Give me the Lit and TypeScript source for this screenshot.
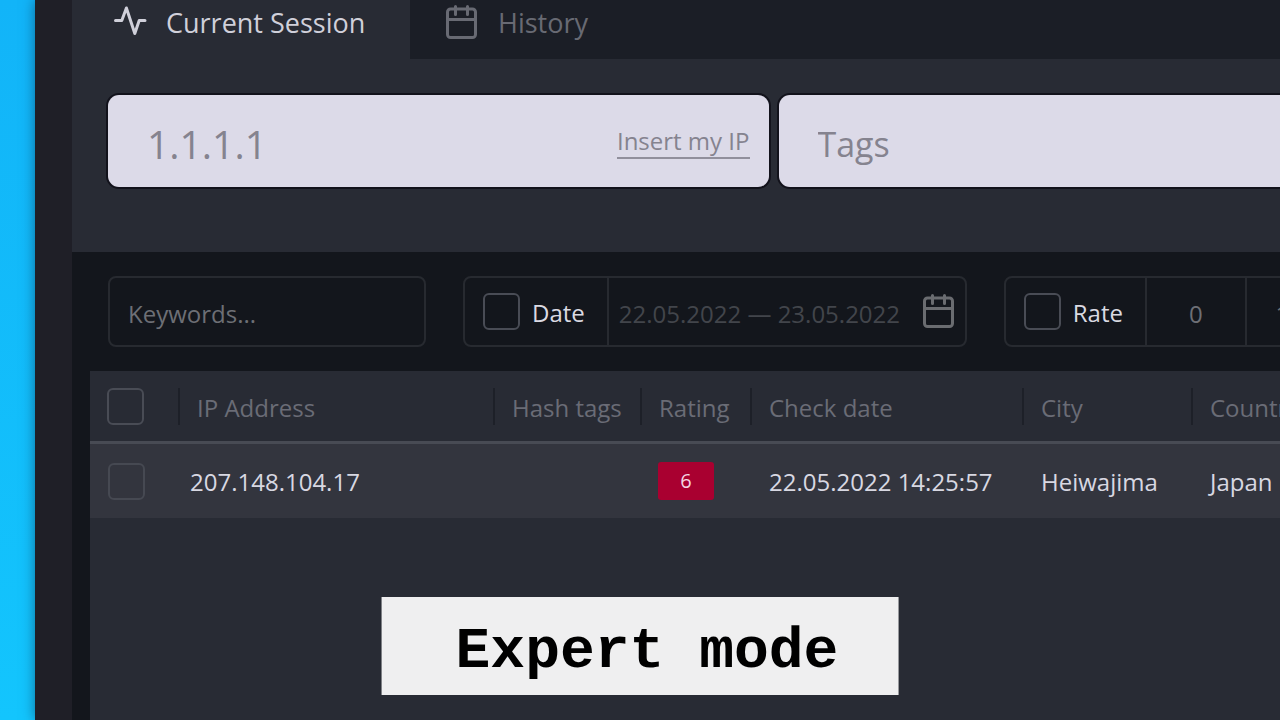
import { LitElement, html, css } from "lit";
import { customElement, property } from "lit/decorators.js";

interface Check {
  ip: string;
  tags: string;
  rating: number;
  date: string;
  city: string;
  country: string;
}

const CHECKS: Check[] = [
  {
    ip: "207.148.104.17",
    tags: "",
    rating: 6,
    date: "22.05.2022 14:25:57",
    city: "Heiwajima",
    country: "Japan",
  },
];

@customElement("ui-icon")
export class UiIcon extends LitElement {
  @property() name = "calendar";

  static styles = css`
    :host {
      display: inline-flex;
      flex: none;
    }
    svg {
      width: 36px;
      height: 36px;
      fill: none;
      stroke: currentColor;
      stroke-width: 3;
      stroke-linecap: round;
      stroke-linejoin: round;
    }
  `;

  render() {
    return this.name === "activity"
      ? html`<svg viewBox="0 0 36 36" aria-hidden="true">
          <path d="M3.500 15.500h6.300L14.400 3l8.400 25.500L27.200 15.500h5.800" />
        </svg>`
      : html`<svg viewBox="0 0 36 36" aria-hidden="true">
          <rect x="3.500" y="4" width="28" height="28.500" rx="3" />
          <path d="M3.500 14.500h28M11.500 1.500v8M23.500 1.500v8" />
        </svg>`;
  }
}

@customElement("app-root")
export class AppRoot extends LitElement {
  static styles = css`
    :host {
      display: flex;
      position: relative;
      height: 100vh;
      overflow: hidden;
      background: linear-gradient(#12b4f8, #13c5fd);
      font-family: "Open Sans", "Noto Sans", sans-serif;
      font-size: 24px;
      line-height: 32px;
      color: #d8d8e2;
    }
    * {
      box-sizing: border-box;
    }
    button,
    input {
      font: inherit;
      color: inherit;
      margin: 0;
      padding: 0;
      border: 0;
      background: none;
      min-width: 0;
      outline: 0;
    }
    .window {
      flex: 1 0 1440px;
      display: flex;
      flex-direction: column;
      margin-left: 35px;
      padding-left: 37px;
      background: #1f1f27;
      box-shadow: 0 0 12px rgba(10, 50, 80, 0.6);
    }
    .tabs {
      display: flex;
      background: #1b1e26;
    }
    .tab {
      display: flex;
      align-items: center;
      gap: 18px;
      height: 59px;
      padding: 0 40px 14px 34px;
      font-size: 27px;
      color: #686a73;
      white-space: nowrap;
    }
    .tab.active {
      width: 338px;
      padding-left: 40px;
      background: #282b34;
      color: #d0d0da;
    }
    .search {
      display: grid;
      grid-template-columns: repeat(2, minmax(0, 1fr));
      gap: 10px;
      padding: 36px 36px 65px;
      background: #282b34;
    }
    .field {
      display: flex;
      align-items: center;
      height: 92px;
      padding: 0 19px 0 39px;
      border-radius: 11px;
      background: #dcdae8;
      box-shadow: 0 0 0 2px #12121b;
      color: #85838f;
    }
    .field input {
      flex: 1;
      height: 64px;
      padding-top: 5px;
      font-size: 34px;
    }
    .field .ip {
      font-size: 39px;
    }
    ::placeholder {
      color: inherit;
      opacity: 1;
    }
    .insert {
      padding-top: 2px;
      border-bottom: 2px solid #918f9c;
      color: inherit;
      text-decoration: none;
      white-space: nowrap;
    }
    .content {
      flex: 1;
      display: flex;
      flex-direction: column;
      padding-left: 18px;
      background: #13161c;
    }
    .filters {
      display: flex;
      gap: 37px;
      padding: 24px 18px;
    }
    .box {
      display: flex;
      height: 71px;
      border: 2px solid #272a30;
      border-radius: 8px;
      color: #6d6f75;
    }
    .keywords {
      width: 318px;
      padding: 4px 18px 0;
    }
    .part {
      display: flex;
      align-items: center;
      gap: 12px;
      padding: 0 22px 0 18px;
    }
    .part + .part {
      border-left: 2px solid #272a30;
    }
    .toggle {
      color: #dadae2;
    }
    .toggle span {
      padding-top: 2px;
    }
    .range {
      width: 358px;
      gap: 0;
      padding: 0 8px 0 10px;
      justify-content: space-between;
      color: #42454b;
    }
    .range input {
      flex: 1;
      padding-top: 4px;
    }
    .range button {
      display: flex;
      color: #6a6c70;
    }
    .number {
      width: 100px;
      padding: 0;
    }
    .number input {
      width: 100%;
      padding-top: 4px;
      text-align: center;
    }
    input[type="checkbox"] {
      appearance: none;
      display: block;
      flex: none;
      width: 37px;
      height: 37px;
      border: 2px solid #494c55;
      border-radius: 6px;
    }
    .panel {
      flex: 1;
      background: #282b34;
    }
    table {
      width: 100%;
      table-layout: fixed;
      border-collapse: separate;
      border-spacing: 0;
    }
    th,
    td {
      padding: 0 0 0 18px;
      text-align: left;
      font-weight: 400;
      white-space: nowrap;
    }
    th {
      height: 73px;
      border-bottom: 3px solid #484b54;
      color: #6a6c76;
    }
    td {
      height: 74px;
      background: #33353e;
    }
    td.text {
      padding: 2px 0 0 19px;
    }
    td.text.ip-cell {
      padding-left: 12px;
    }
    .head {
      display: flex;
      align-items: center;
      height: 37px;
      margin-left: -18px;
      padding: 4px 0 0 17px;
      border-left: 2px solid #1d2028;
    }
    th:first-child .head {
      padding: 0 0 0 17px;
      border-left: 0;
    }
    td input[type="checkbox"] {
      border-color: #464952;
    }
    .c-check {
      width: 88px;
    }
    .c-ip {
      width: 315px;
    }
    .c-tags {
      width: 147px;
    }
    .c-rating {
      width: 110px;
    }
    .c-date {
      width: 272px;
    }
    .c-city {
      width: 169px;
    }
    .badge {
      display: flex;
      align-items: center;
      justify-content: center;
      width: 56px;
      height: 38px;
      border-radius: 3px;
      background: #a90030;
      font-size: 20px;
      color: #f4d5e2;
    }
    .caption {
      position: absolute;
      left: 50%;
      bottom: 25px;
      transform: translateX(-50%);
      padding: 20px 60px 8px 74px;
      background: #efeff0;
      color: #000;
      font: bold 58px/70px "Courier New", "Liberation Mono", monospace;
      white-space: nowrap;
    }
  `;

  render() {
    const columns = [
      ["c-ip", "IP Address"],
      ["c-tags", "Hash tags"],
      ["c-rating", "Rating"],
      ["c-date", "Check date"],
      ["c-city", "City"],
      ["c-country", "Country"],
    ];
    return html`
      <main class="window">
        <nav class="tabs">
          <button class="tab active">
            <ui-icon name="activity"></ui-icon>Current Session
          </button>
          <button class="tab"><ui-icon></ui-icon>History</button>
        </nav>
        <form class="search">
          <div class="field">
            <input class="ip" aria-label="IP address" placeholder="1.1.1.1" />
            <a class="insert" href="#">Insert my IP</a>
          </div>
          <div class="field">
            <input aria-label="Tags" placeholder="Tags" />
          </div>
        </form>
        <section class="content">
          <div class="filters">
            <input class="box keywords" aria-label="Keywords" placeholder="Keywords..." />
            <div class="box">
              <label class="part toggle"><input type="checkbox" /><span>Date</span></label>
              <div class="part range">
                <input aria-label="Date range" value="22.05.2022 — 23.05.2022" />
                <button aria-label="Pick dates"><ui-icon></ui-icon></button>
              </div>
            </div>
            <div class="box">
              <label class="part toggle"><input type="checkbox" /><span>Rate</span></label>
              <div class="part number"><input aria-label="Lowest rate" value="0" /></div>
              <div class="part number"><input aria-label="Highest rate" value="100" /></div>
            </div>
          </div>
          <div class="panel">
            <table>
              <thead>
                <tr>
                  <th class="c-check">
                    <div class="head"><input type="checkbox" aria-label="Select all" /></div>
                  </th>
                  ${columns.map(
                    ([name, title]) =>
                      html`<th class=${name}><div class="head">${title}</div></th>`
                  )}
                </tr>
              </thead>
              <tbody>
                ${CHECKS.map(
                  (c) => html`<tr>
                    <td><input type="checkbox" aria-label="Select ${c.ip}" /></td>
                    <td class="text ip-cell">${c.ip}</td>
                    <td class="text">${c.tags}</td>
                    <td><span class="badge">${c.rating}</span></td>
                    <td class="text">${c.date}</td>
                    <td class="text">${c.city}</td>
                    <td class="text">${c.country}</td>
                  </tr>`
                )}
              </tbody>
            </table>
          </div>
        </section>
      </main>
      <div class="caption">Expert mode</div>
    `;
  }
}
